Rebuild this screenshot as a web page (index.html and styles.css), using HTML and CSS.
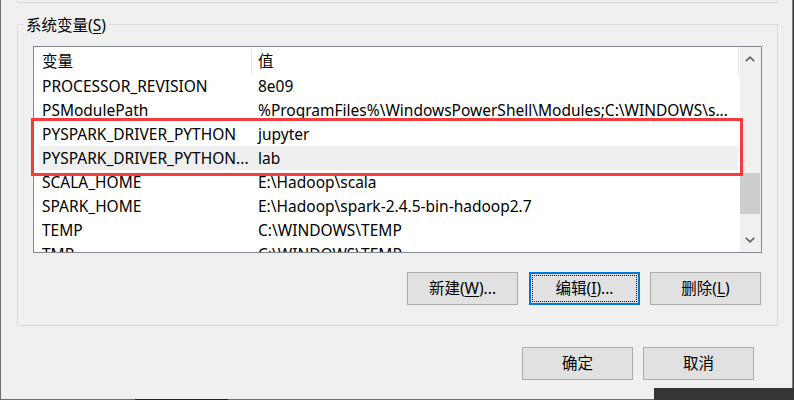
FILE: index.html
```html
<!DOCTYPE html>
<html lang="zh-CN">
<head>
<meta charset="utf-8">
<title>环境变量</title>
<link rel="stylesheet" href="styles.css">
</head>
<body>
<div class="dialog">
  <div class="group-prev"></div>
  <div class="group">
    <div class="group-title">系统变量(<u>S</u>)</div>
    <div class="listview">
      <div class="lv-main">
        <div class="lv-header">
          <div class="hc c1">变量</div>
          <div class="hc c2">值</div>
        </div>
        <div class="row"><div class="c1">PROCESSOR_REVISION</div><div class="c2">8e09</div></div>
        <div class="row"><div class="c1">PSModulePath</div><div class="c2">%ProgramFiles%\WindowsPowerShell\Modules;C:\WINDOWS\s...</div></div>
        <div class="row"><div class="c1">PYSPARK_DRIVER_PYTHON</div><div class="c2">jupyter</div></div>
        <div class="row selected"><div class="c1">PYSPARK_DRIVER_PYTHON...</div><div class="c2">lab</div></div>
        <div class="row"><div class="c1">SCALA_HOME</div><div class="c2">E:\Hadoop\scala</div></div>
        <div class="row"><div class="c1">SPARK_HOME</div><div class="c2">E:\Hadoop\spark-2.4.5-bin-hadoop2.7</div></div>
        <div class="row"><div class="c1">TEMP</div><div class="c2">C:\WINDOWS\TEMP</div></div>
        <div class="row"><div class="c1">TMP</div><div class="c2">C:\WINDOWS\TEMP</div></div>
      </div>
      <div class="scrollbar">
        <div class="sb-btn">
          <svg width="10" height="6" viewBox="0 0 10 6"><polyline points="0.8,5.2 5,1.2 9.2,5.2" fill="none" stroke="#606060" stroke-width="1.6"/></svg>
        </div>
        <div class="sb-track"><div class="sb-thumb"></div></div>
        <div class="sb-btn">
          <svg width="10" height="6" viewBox="0 0 10 6"><polyline points="0.8,0.8 5,4.8 9.2,0.8" fill="none" stroke="#606060" stroke-width="1.6"/></svg>
        </div>
      </div>
    </div>
    <div class="btn-row">
      <button class="btn">新建(<u>W</u>)...</button>
      <button class="btn focused">编辑(<u>I</u>)...</button>
      <button class="btn">删除(<u>L</u>)</button>
    </div>
  </div>
  <div class="dlg-buttons">
    <button class="btn">确定</button>
    <button class="btn">取消</button>
  </div>
</div>
<div class="annot"></div>
<div class="taskbar-piece"></div>
<div class="bottom-dark"></div>
</body>
</html>
```
FILE: styles.css
```css
* { box-sizing: border-box; }

html, body {
  margin: 0;
  padding: 0;
}

body {
  width: 794px;
  height: 400px;
  overflow: hidden;
  background: #3a3a3a;
  position: relative;
  font-family: "Noto Sans", "Noto Sans CJK SC", sans-serif;
  font-size: 15.5px;
  color: #000;
}

.dialog {
  width: 793px;
  height: 400px;
  background: #f0f0f0;
  border-left: 1px solid #6e6e6e;
  border-right: 1px solid #7c7c7c;
  border-bottom: 1px solid #6e6e6e;
}

.group-prev {
  margin-left: 16px;
  width: 761px;
  height: 3px;
  border: 1px solid #dcdcdc;
  border-top: none;
}

.group {
  margin-left: 16px;
  margin-top: 21px;
  width: 761px;
  height: 302px;
  border: 1px solid #dcdcdc;
}

.group-title {
  width: max-content;
  margin-top: -10px;
  margin-left: 6px;
  padding: 0 2px;
  height: 20px;
  line-height: 20px;
  background: #f0f0f0;
  white-space: nowrap;
}

u { text-decoration: underline; text-underline-offset: 2px; }

.listview {
  margin-top: 11px;
  margin-left: 15px;
  width: 729px;
  height: 207px;
  border: 1px solid #828790;
  display: flex;
}

.lv-main {
  flex: 1;
  background: #fff;
  overflow: hidden;
}

.lv-header {
  display: flex;
  height: 27px;
  padding-left: 5px;
  padding-top: 1px;
}

.hc {
  height: 26px;
  line-height: 26px;
  white-space: nowrap;
}

.hc.c1 {
  width: 212px;
  padding-left: 3px;
}

.hc.c2 {
  width: 488px;
  padding-left: 6px;
  border-left: 1px solid #e5e5e5;
  border-right: 1px solid #e5e5e5;
}

.row {
  display: flex;
  margin-left: 5px;
  width: 699px;
  height: 24px;
  line-height: 24px;
  white-space: nowrap;
}

.row.selected { background: #efefef; }

.row .c1 {
  width: 212px;
  flex: none;
  padding-left: 3px;
  overflow: hidden;
}

.row .c2 {
  flex: 1;
  padding-left: 7px;
  overflow: hidden;
}

.scrollbar {
  width: 21px;
  background: #f0f0f0;
  display: flex;
  flex-direction: column;
}

.sb-btn {
  height: 24px;
  display: flex;
  align-items: center;
  justify-content: center;
}

.sb-btn svg { display: block; margin-left: -1px; }

.sb-track { flex: 1; }

.sb-thumb {
  margin-top: 102px;
  width: 20px;
  height: 41px;
  background: #cdcdcd;
}

.btn-row {
  margin-top: 19px;
  display: flex;
  justify-content: flex-end;
  padding-right: 16px;
}

.btn {
  width: 111px;
  height: 33px;
  background: #e1e1e1;
  border: 1px solid #adadad;
  font-family: "Noto Sans", "Noto Sans CJK SC", sans-serif;
  font-size: 15.5px;
  color: #000;
  padding: 0;
  margin: 0;
  line-height: 31px;
  text-align: center;
  position: relative;
}

.btn-row .btn + .btn { margin-left: 11px; }
.btn-row .btn:last-child { margin-left: 10px; }

.btn.focused {
  border: 2px solid #0078d7;
  line-height: 29px;
}

.btn.focused::after {
  content: "";
  position: absolute;
  left: 1px;
  top: 1px;
  right: 1px;
  bottom: 1px;
  border: 1px dotted #000;
}

.dlg-buttons {
  margin-top: 21px;
  display: flex;
  justify-content: flex-end;
  padding-right: 38px;
}

.dlg-buttons .btn + .btn { margin-left: 10px; }

.annot {
  position: absolute;
  left: 31px;
  top: 118px;
  width: 712px;
  height: 58px;
  border: 3px solid #f43c3c;
}

.taskbar-piece {
  position: absolute;
  left: 654px;
  top: 388px;
  width: 140px;
  height: 12px;
  background: #353535;
}

.bottom-dark {
  position: absolute;
  left: 135px;
  top: 399px;
  width: 93px;
  height: 1px;
  background: #222;
}
```
